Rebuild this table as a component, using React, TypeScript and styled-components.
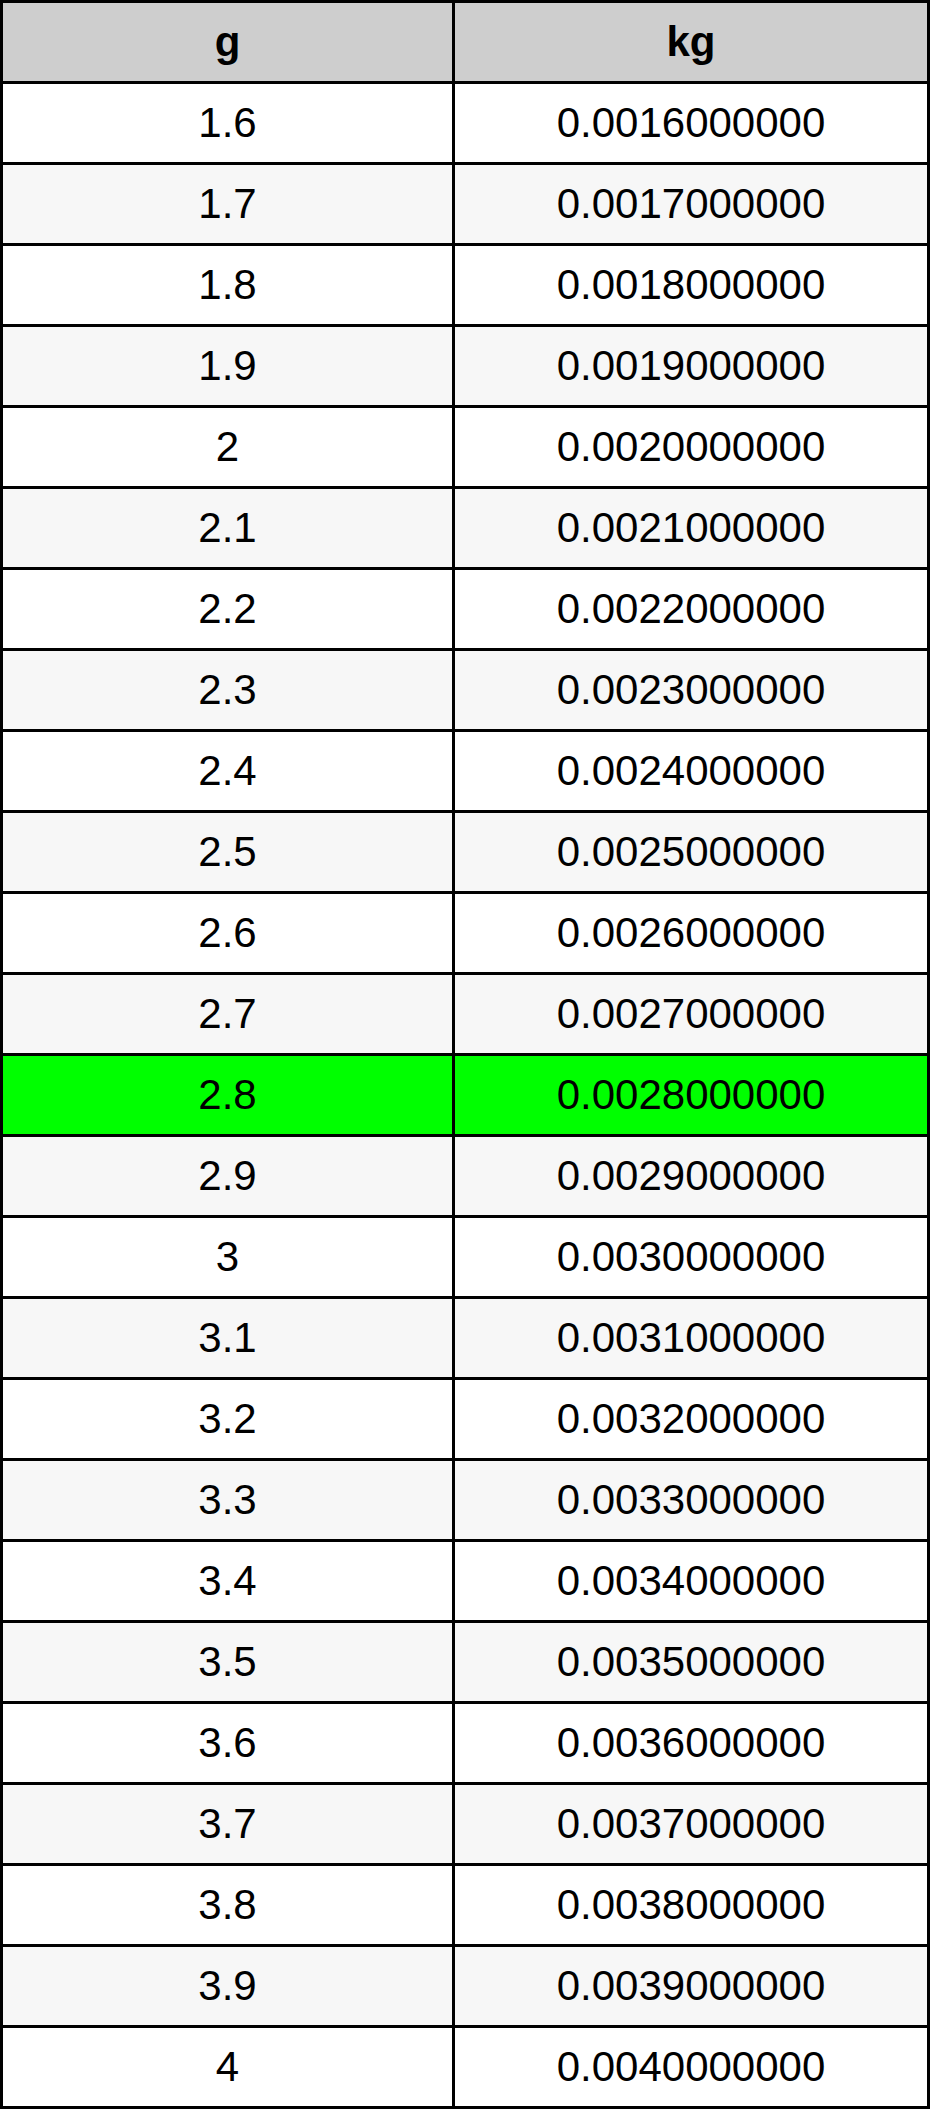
import React from "react";
import styled, { createGlobalStyle } from "styled-components";

const GlobalStyle = createGlobalStyle`
  html, body {
    margin: 0;
    padding: 0;
    background: #ffffff;
  }
  body {
    font-family: "Liberation Sans", Arial, Helvetica, sans-serif;
  }
`;

const Table = styled.table`
  width: 930px;
  table-layout: fixed;
  border-collapse: separate;
  border-spacing: 0;
  border-top: 3px solid #000;
  border-left: 3px solid #000;
  font-family: "Liberation Sans", Arial, Helvetica, sans-serif;
  font-size: 42px;
  color: #000;
`;

const Col = styled.col<{ $w: number }>`
  width: ${(p) => p.$w}px;
`;

const HeadCell = styled.th`
  height: 78px;
  padding: 0;
  background: #cecece;
  font-weight: bold;
  text-align: center;
  vertical-align: middle;
  border-right: 3px solid #000;
  border-bottom: 3px solid #000;
`;

const Row = styled.tr<{ $alt: boolean; $hl: boolean }>`
  background: ${(p) => (p.$hl ? "#00ff00" : p.$alt ? "#f7f7f7" : "#ffffff")};
`;

const Cell = styled.td`
  height: 78px;
  padding: 0;
  text-align: center;
  vertical-align: middle;
  border-right: 3px solid #000;
  border-bottom: 3px solid #000;
`;

const rows: number[] = [];
for (let i = 16; i <= 40; i++) rows.push(i / 10);

const fmtG = (v: number) => String(v);
const fmtKg = (v: number) => (v / 1000).toFixed(10);

export default function App() {
  return (
    <>
      <GlobalStyle />
      <Table>
        <colgroup>
          <Col $w={452} />
          <Col $w={475} />
        </colgroup>
        <thead>
          <tr>
            <HeadCell>g</HeadCell>
            <HeadCell>kg</HeadCell>
          </tr>
        </thead>
        <tbody>
          {rows.map((v, i) => (
            <Row key={v} $alt={i % 2 === 1} $hl={Math.abs(v - 2.8) < 1e-9}>
              <Cell>{fmtG(v)}</Cell>
              <Cell>{fmtKg(v)}</Cell>
            </Row>
          ))}
        </tbody>
      </Table>
    </>
  );
}
